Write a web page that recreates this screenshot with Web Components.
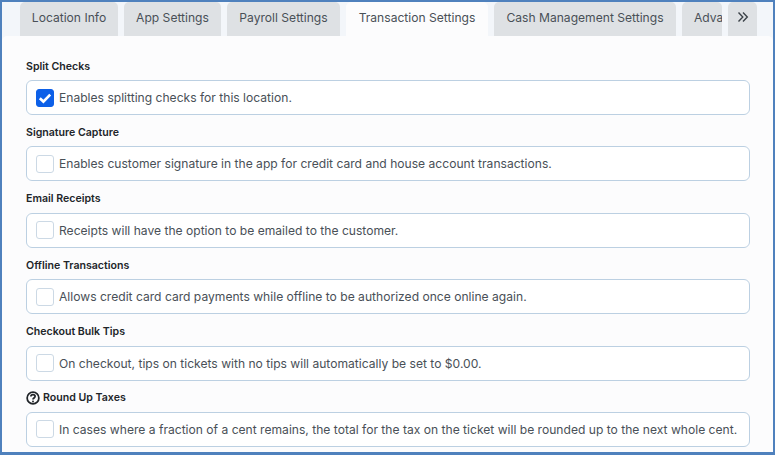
<!DOCTYPE html>
<html><head><meta charset="utf-8"><style>
html,body{margin:0;padding:0;background:#fff}
body{width:775px;height:455px;overflow:hidden;font-family:Inter,"Liberation Sans",sans-serif}
</style></head><body>
<template id="t-frame"><style>
:host{display:flex;flex-direction:column;box-sizing:border-box;width:775px;height:455px;border:2px solid #4f81bd;border-width:2px 2px 3px 2px;background:#f3f6fa;overflow:hidden}
.tabs{display:flex;height:34px;flex:none;padding-left:18px;gap:6px;position:relative}
.panel{flex:1;background:#fcfcfd;border-radius:5px 5px 0 0;padding:20px 23px 0 24px;display:flex;flex-direction:column;overflow:hidden}
</style><div class="tabs"><slot name="tabs"></slot></div><div class="panel"><slot></slot></div></template>

<template id="t-tab"><style>
:host{display:block;flex:none;box-sizing:border-box;height:34px;background:#dee1e4;color:#495057;border-radius:5px 5px 0 0;font-size:12.1px;line-height:32px;text-align:center;white-space:nowrap;overflow:hidden}
:host([active]){background:#fcfcfd;color:#495057}
:host([clip]){text-align:left;padding-left:12px}
::slotted(svg){display:block;margin:8px auto 0}
</style><slot></slot></template>

<template id="t-setting"><style>
:host{display:block;flex:none;height:66.4px;box-sizing:border-box}
.label{display:flex;align-items:center;gap:3px;height:20px;font-size:10.6px;font-weight:600;color:#212529}
.box{box-sizing:border-box;height:35px;margin-top:4px;display:flex;align-items:center;gap:5px;padding-left:9px;background:#fff;border:1px solid #bcd0e2;border-radius:6px;font-size:12.1px;color:#495057;white-space:nowrap}
.check{flex:none;box-sizing:border-box;width:18px;height:18px;border-radius:3px;border:1px solid #ccd9e5;background:#fff;display:flex;align-items:center;justify-content:center}
:host([checked]) .check{background:#0d60e8;border-color:#0d60e8}
:host(:not([checked])) svg.tick{display:none}
.q{display:none}
:host([help]) .q{display:block}
</style>
<div class="label"><svg class="q" width="14" height="14" viewBox="0 0 16 16" fill="none" stroke="#212529"><circle cx="8" cy="8" r="6.7" stroke-width="2"/><path d="M5.6 6.3c0-1.5 1.1-2.3 2.4-2.3s2.4.8 2.4 2.1c0 1.8-2.4 1.9-2.4 3.6" stroke-width="2"/><circle cx="8" cy="12" r="1.1" fill="#212529" stroke="none"/></svg><span id="l"></span></div>
<div class="box"><div class="check"><svg class="tick" width="14" height="14" viewBox="0 0 14 14" fill="none"><path d="M1.8 7.3 5.4 10.6 12.2 3.6" stroke="#fff" stroke-width="2.7"/></svg></div><span><slot></slot></span></div></template>

<app-frame>
<tab-item slot="tabs" style="width:98px">Location Info</tab-item>
<tab-item slot="tabs" style="width:97px">App Settings</tab-item>
<tab-item slot="tabs" style="width:113px">Payroll Settings</tab-item>
<tab-item slot="tabs" active style="width:142px">Transaction Settings</tab-item>
<tab-item slot="tabs" style="width:182px">Cash Management Settings</tab-item>
<tab-item slot="tabs" clip style="width:40px">Adva</tab-item>
<tab-item slot="tabs" style="width:29px"><svg width="14" height="14" viewBox="0 0 14 14" fill="none" stroke="#3c4349" stroke-width="1.4"><path d="M2.5 2.5 6.8 7 2.5 11.5M7 2.5 11.3 7 7 11.5"/></svg></tab-item>
<setting-row label="Split Checks" checked>Enables splitting checks for this location.</setting-row>
<setting-row label="Signature Capture">Enables customer signature in the app for credit card and house account transactions.</setting-row>
<setting-row label="Email Receipts">Receipts will have the option to be emailed to the customer.</setting-row>
<setting-row label="Offline Transactions">Allows credit card card payments while offline to be authorized once online again.</setting-row>
<setting-row label="Checkout Bulk Tips">On checkout, tips on tickets with no tips will automatically be set to $0.00.</setting-row>
<setting-row label="Round Up Taxes" help>In cases where a fraction of a cent remains, the total for the tax on the ticket will be rounded up to the next whole cent.</setting-row>
</app-frame>
<script>
function def(name,tid,init){customElements.define(name,class extends HTMLElement{constructor(){super();this.attachShadow({mode:'open'}).appendChild(document.getElementById(tid).content.cloneNode(true));}connectedCallback(){if(init)init(this)}})}
def('app-frame','t-frame');
def('tab-item','t-tab');
def('setting-row','t-setting',e=>{e.shadowRoot.getElementById('l').textContent=e.getAttribute('label')});
</script>
</body></html>
